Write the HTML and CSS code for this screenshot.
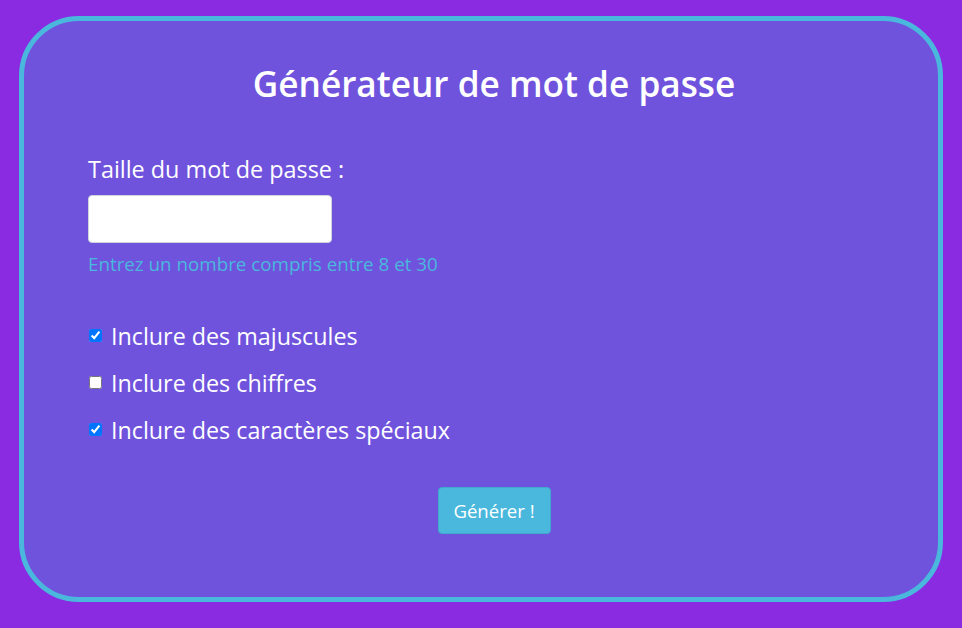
FILE: index.html
```html
<!DOCTYPE html>
<html lang="fr">
<head>
<meta charset="utf-8">
<title>Générateur de mot de passe</title>
<link rel="stylesheet" href="styles.css">
</head>
<body>
<main class="card">
  <h1 class="title">Générateur de mot de passe</h1>
  <form class="form">
    <label class="label" for="size">Taille du mot de passe :</label>
    <input class="field" id="size" type="text">
    <p class="hint">Entrez un nombre compris entre 8 et 30</p>
    <div class="options">
      <label class="option"><input type="checkbox" checked><span>Inclure des majuscules</span></label>
      <label class="option"><input type="checkbox"><span>Inclure des chiffres</span></label>
      <label class="option"><input type="checkbox" checked><span>Inclure des caractères spéciaux</span></label>
    </div>
    <div class="actions">
      <button class="btn" type="button">Générer !</button>
    </div>
  </form>
</main>
</body>
</html>
```
FILE: styles.css
```css
* { box-sizing: border-box; }
html, body { height: 100%; }
body {
  margin: 0;
  padding: 16px 19px 26px 19px;
  background: #8a2be2;
  font-family: "Open Sans", "Noto Sans", sans-serif;
  color: #ffffff;
}
.card {
  height: 586px;
  border: 5px solid #4ab8dc;
  border-radius: 60px;
  background: #6f53dd;
  padding: 41px 38px 0 64px;
}
.title {
  margin: 0;
  text-align: center;
  font-size: 35.2px;
  font-weight: 600;
  line-height: 1.2;
}
.form {
  margin-top: 51px;
  display: flex;
  flex-direction: column;
  align-items: flex-start;
}
.label {
  font-size: 23.4px;
  line-height: 1.2;
}
.field {
  margin-top: 12px;
  width: 244px;
  height: 48px;
  border: 1px solid #ced4da;
  border-radius: 4px;
  background: #fff;
}
.hint {
  margin: 10px 0 0;
  font-size: 18.8px;
  color: #4ab8dc;
  line-height: 1.2;
}
.options {
  margin-top: 46px;
  display: flex;
  flex-direction: column;
  gap: 19px;
}
.option {
  display: flex;
  align-items: center;
  gap: 9px;
  font-size: 23.3px;
  line-height: 28px;
}
.option input {
  margin: 0 0 0 1px;
  width: 13px;
  height: 13px;
}
.actions {
  align-self: stretch;
  display: flex;
  justify-content: center;
  margin-top: 43px;
}
.btn {
  width: 113px;
  height: 47px;
  border: 1px solid #3fa8cc;
  border-radius: 4px;
  background: #4ab8dc;
  color: #fff;
  font-family: inherit;
  font-size: 18.6px;
}
```
